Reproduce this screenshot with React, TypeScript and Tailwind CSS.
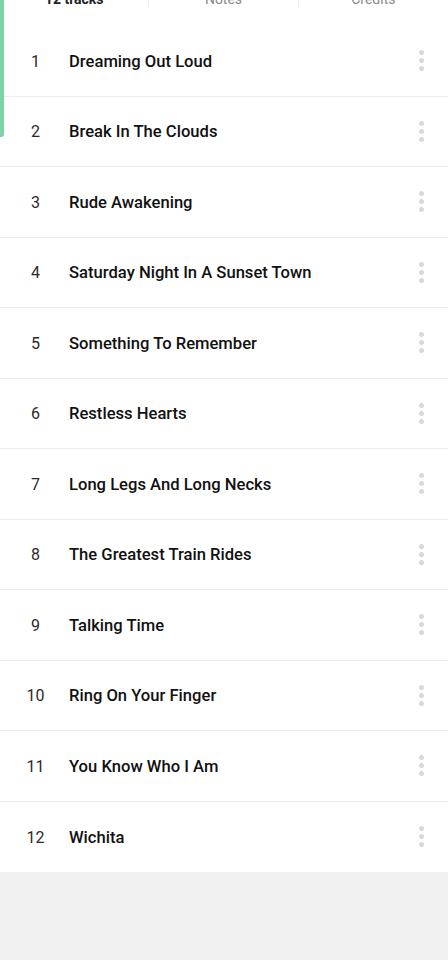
const TRACKS = [
  "Dreaming Out Loud",
  "Break In The Clouds",
  "Rude Awakening",
  "Saturday Night In A Sunset Town",
  "Something To Remember",
  "Restless Hearts",
  "Long Legs And Long Necks",
  "The Greatest Train Rides",
  "Talking Time",
  "Ring On Your Finger",
  "You Know Who I Am",
  "Wichita",
];

function MoreDots() {
  return (
    <div className="flex flex-col items-center gap-[3px]">
      <span className="w-[5px] h-[5px] rounded-full bg-[#d9d9d9]" />
      <span className="w-[5px] h-[5px] rounded-full bg-[#d9d9d9]" />
      <span className="w-[5px] h-[5px] rounded-full bg-[#d9d9d9]" />
    </div>
  );
}

export default function App() {
  return (
    <div
      className="min-h-[960px] w-[448px] bg-[#f0f0f0] overflow-hidden"
      style={{ fontFamily: "Roboto, 'Noto Sans', sans-serif" }}
    >
      <div className="relative bg-white">
        {/* green accent */}
        <div className="absolute left-0 top-0 w-[4px] h-[137px] bg-[#7dd3a3] rounded-br-[3px]" />

        {/* Tabs */}
        <div className="grid grid-cols-3 h-[26px] overflow-hidden">
          <div className="flex justify-center border-r border-[#ededed] h-[7px]">
            <span className="-mt-[11px] text-[14px] leading-[20px] font-bold text-[#222] whitespace-nowrap">12 tracks</span>
          </div>
          <div className="flex justify-center border-r border-[#ededed] h-[7px]">
            <span className="-mt-[11px] text-[14px] leading-[20px] text-[#8a8a8a] whitespace-nowrap">Notes</span>
          </div>
          <div className="flex justify-center h-[7px]">
            <span className="-mt-[11px] text-[14px] leading-[20px] text-[#8a8a8a] whitespace-nowrap">Credits</span>
          </div>
        </div>

        {/* Track list */}
        <div>
          {TRACKS.map((title, i) => (
            <div
              key={i}
              className={`flex items-center h-[70.5px] ${i < TRACKS.length - 1 ? "border-b border-[#ececec]" : ""}`}
            >
              <div className="w-[72px] shrink-0 flex justify-center pr-[1px] pt-[2px] text-[16px] text-[#2a2a2a]">
                {i + 1}
              </div>
              <div className="flex-1 -ml-[3px] pt-[3px] text-[16.6px] font-medium text-[#111]">
                {title}
              </div>
              <div className="w-[52px] flex justify-center pr-[2px]">
                <MoreDots />
              </div>
            </div>
          ))}
        </div>
      </div>
    </div>
  );
}
